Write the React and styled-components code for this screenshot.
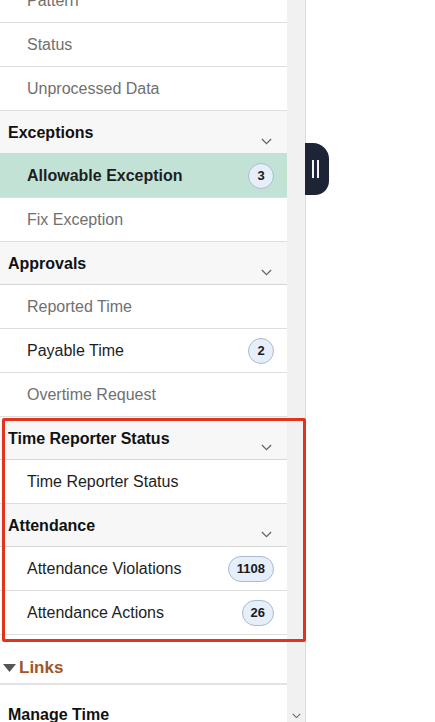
import React from 'react';
import styled, { createGlobalStyle } from 'styled-components';

const GlobalStyle = createGlobalStyle`
  html, body {
    margin: 0;
    padding: 0;
    background: #fff;
    font-family: "Liberation Sans", Arial, sans-serif;
  }
`;

const Page = styled.div`
  position: relative;
  display: flex;
  width: 435px;
  height: 722px;
  overflow: hidden;
  background: #fff;
`;

const Sidebar = styled.div`
  display: flex;
  width: 305px;
  height: 722px;
  border-right: 1px solid #dcdcdc;
`;

const Menu = styled.div`
  width: 287px;
  height: 722px;
  overflow: hidden;
  background: #fff;
`;

const MenuList = styled.div`
  margin-top: -21px;
`;

const Scrollbar = styled.div`
  flex: 1;
  display: flex;
  flex-direction: column;
  justify-content: flex-end;
  align-items: center;
  background: #f1f1f1;
  padding-bottom: 4px;
`;

const Item = styled.div`
  display: flex;
  align-items: center;
  justify-content: space-between;
  height: 44px;
  padding: 0 13px 0 27px;
  border-bottom: 1px solid #dedede;
  box-sizing: border-box;
  font-size: 16px;
  color: ${p => (p.muted ? '#707070' : '#1e1e1e')};
  font-weight: ${p => (p.active ? 'bold' : 'normal')};
  background: ${p => (p.active ? '#c3e2d6' : '#fff')};
`;

const Header = styled.div`
  display: flex;
  justify-content: space-between;
  height: 43px;
  padding: 13px 15px 0 8px;
  border-bottom: 1px solid #d6d6d6;
  box-sizing: border-box;
  background: #f7f7f7;
  font-size: 16px;
  font-weight: bold;
  color: #111;
  svg {
    margin-top: 14px;
  }
`;

const Badge = styled.div`
  min-width: 26px;
  height: 26px;
  padding: 0 ${p => (p.wide ? '8px' : '0')};
  box-sizing: border-box;
  display: flex;
  align-items: center;
  justify-content: center;
  border-radius: 13px;
  background: #e5eef9;
  border: 1px solid #a9bccf;
  font-size: 13px;
  font-weight: bold;
  color: #1a1a1a;
`;

const Spacer = styled.div`
  height: 12px;
  background: #fff;
`;

const LinksHeader = styled.div`
  display: flex;
  align-items: center;
  gap: 3px;
  height: 38px;
  padding: 5px 0 0 3px;
  border-bottom: 2px solid #e2e2e2;
  box-sizing: border-box;
  font-size: 17px;
  font-weight: bold;
  color: #a0562a;
  svg {
    margin-top: 1px;
  }
`;

const SubHeader = styled.div`
  padding: 21px 8px 0;
  font-size: 16px;
  font-weight: bold;
  color: #111;
`;

const Highlight = styled.div`
  position: absolute;
  left: 2px;
  top: 418px;
  width: 304px;
  height: 224px;
  box-sizing: border-box;
  border: 3px solid #e1341e;
  border-radius: 2px;
  pointer-events: none;
`;

const CollapseTab = styled.div`
  position: absolute;
  left: 305px;
  top: 143px;
  width: 24px;
  height: 52px;
  box-sizing: border-box;
  background: #1c2435;
  border-radius: 0 16px 14px 0;
  display: flex;
  align-items: center;
  justify-content: center;
  gap: 3px;
  padding-right: 3px;
`;

const Bar = styled.div`
  width: 2px;
  height: 18px;
  background: #f2f2f2;
`;

const Chevron = ({ size = 11, color = '#666' }) => (
  <svg width={size} height={size * 0.6} viewBox="0 0 12 7" fill="none">
    <path d="M1 1l5 5 5-5" stroke={color} strokeWidth="1.4" />
  </svg>
);

const Caret = () => (
  <svg width="13" height="8" viewBox="0 0 13 8">
    <path d="M0 0h13L6.5 8z" fill="#555" />
  </svg>
);

const groups = [
  {
    items: [
      { label: 'Pattern', muted: true },
      { label: 'Status', muted: true },
      { label: 'Unprocessed Data', muted: true },
    ],
  },
  {
    title: 'Exceptions',
    items: [
      { label: 'Allowable Exception', active: true, count: '3' },
      { label: 'Fix Exception', muted: true },
    ],
  },
  {
    title: 'Approvals',
    items: [
      { label: 'Reported Time', muted: true },
      { label: 'Payable Time', count: '2' },
      { label: 'Overtime Request', muted: true },
    ],
  },
  {
    title: 'Time Reporter Status',
    items: [{ label: 'Time Reporter Status' }],
  },
  {
    title: 'Attendance',
    items: [
      { label: 'Attendance Violations', count: '1108' },
      { label: 'Attendance Actions', count: '26' },
    ],
  },
];

export default function App() {
  return (
    <>
      <GlobalStyle />
      <Page>
        <Sidebar>
          <Menu>
            <MenuList>
              {groups.map((g, i) => (
                <React.Fragment key={i}>
                  {g.title && (
                    <Header>
                      <span>{g.title}</span>
                      <Chevron />
                    </Header>
                  )}
                  {g.items.map(it => (
                    <Item key={it.label} muted={it.muted} active={it.active}>
                      <span>{it.label}</span>
                      {it.count && <Badge wide={it.count.length > 1}>{it.count}</Badge>}
                    </Item>
                  ))}
                </React.Fragment>
              ))}
              <Spacer />
              <LinksHeader>
                <Caret />
                <span>Links</span>
              </LinksHeader>
              <SubHeader>Manage Time</SubHeader>
            </MenuList>
          </Menu>
          <Scrollbar>
            <Chevron size={9} color="#666" />
          </Scrollbar>
        </Sidebar>
        <Highlight />
        <CollapseTab>
          <Bar />
          <Bar />
        </CollapseTab>
      </Page>
    </>
  );
}
